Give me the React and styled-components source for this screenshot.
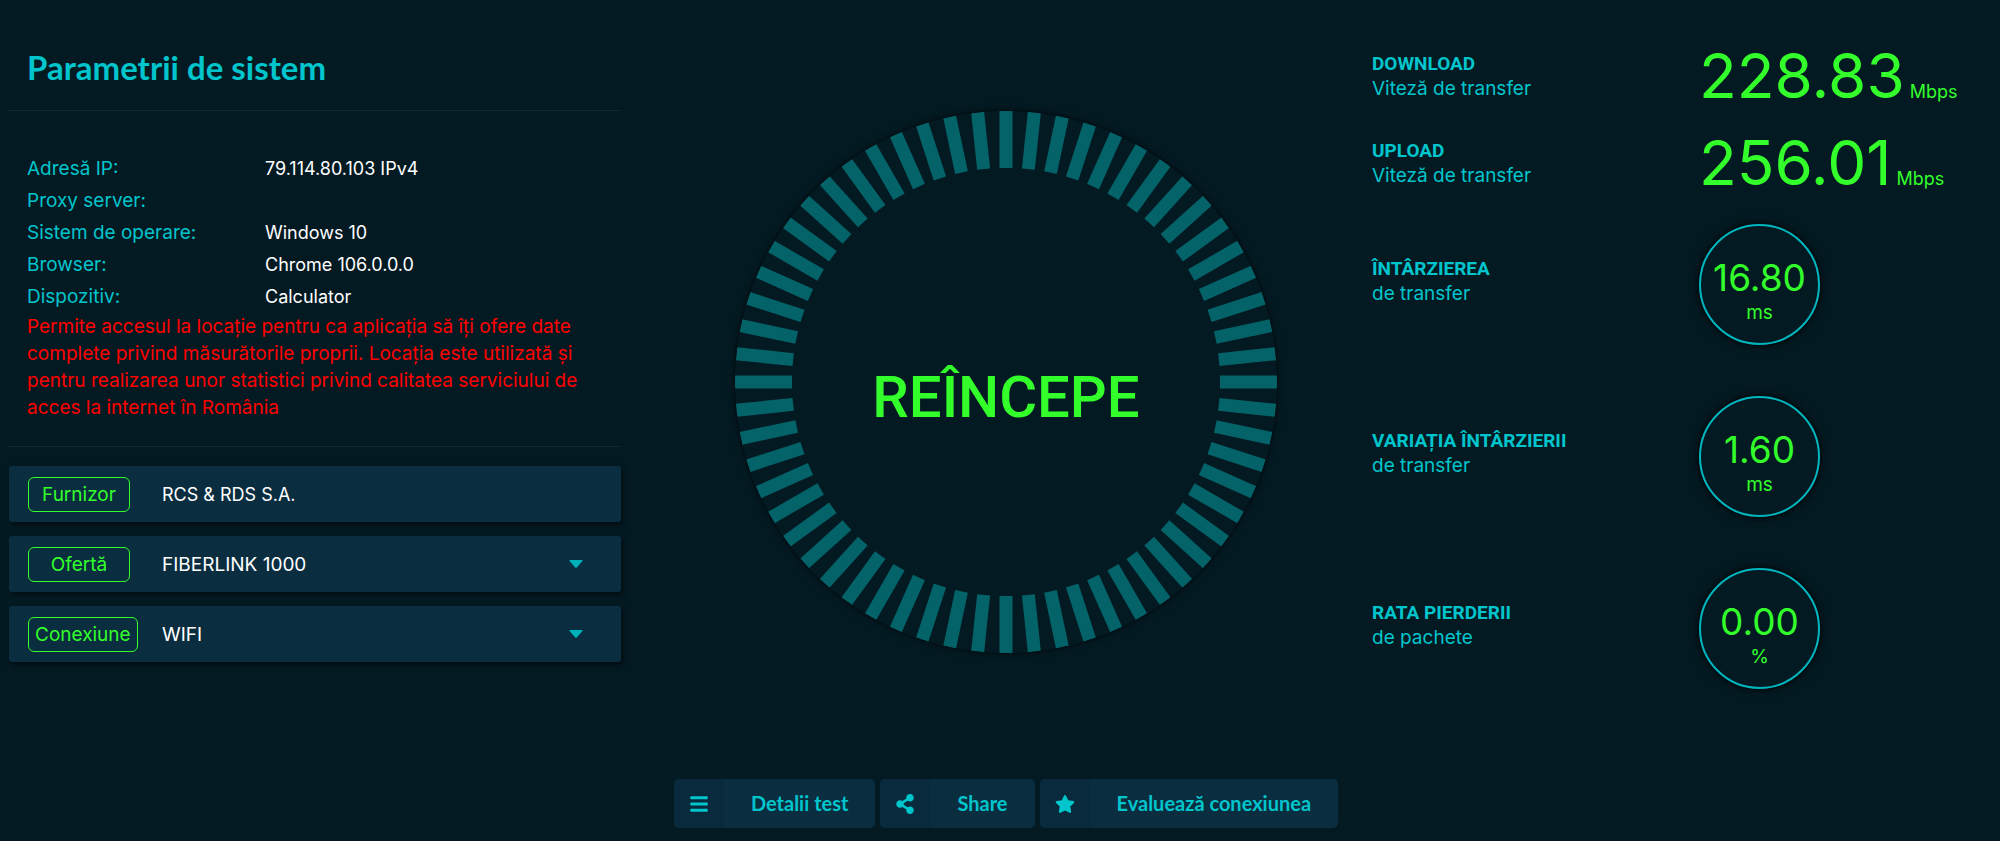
import React, { useState } from 'react'
import styled, { createGlobalStyle } from 'styled-components';
import { FaBars, FaShareAlt, FaStar } from 'react-icons/fa';

const systemInfo = [
  { label: 'Adresă IP:', value: '79.114.80.103 IPv4' },
  { label: 'Proxy server:', value: '' },
  { label: 'Sistem de operare:', value: 'Windows 10' },
  { label: 'Browser:', value: 'Chrome 106.0.0.0' },
  { label: 'Dispozitiv:', value: 'Calculator' },
];

const speeds = [
  { title: 'DOWNLOAD', value: '228.83' },
  { title: 'UPLOAD', value: '256.01' },
];

const gauges = [
  { title: 'ÎNTÂRZIEREA', sub: 'de transfer', value: '16.80', unit: 'ms' },
  { title: 'VARIAȚIA ÎNTÂRZIERII', sub: 'de transfer', value: '1.60', unit: 'ms' },
  { title: 'RATA PIERDERII', sub: 'de pachete', value: '0.00', unit: '%' },
];

const ticks = Array.from({ length: 60 }, (_, i) => i * 6);

function Dial() {
  return (
    <DialSvg viewBox="-271 -271 542 542" aria-hidden="true">
      <clipPath id="dial-edge">
        <circle r="271" />
      </clipPath>
      <g clipPath="url(#dial-edge)">
        {ticks.map((angle) => (
          <rect key={angle} x="-6.5" y="-271" width="13" height="57" transform={`rotate(${angle})`} />
        ))}
      </g>
    </DialSvg>
  )
}

function SelectRow({ id, label, options }) {
  const [value, setValue] = useState(options[0]);

  return (
    <Row>
      <Tag htmlFor={id}>{label}</Tag>
      <Select id={id} value={value} onChange={(e) => setValue(e.target.value)}>
        {options.map((option) => (
          <option key={option}>{option}</option>
        ))}
      </Select>
      <Caret viewBox="0 0 14 8" aria-hidden="true">
        <path d="M1 0h12q1 0 .5 1L7.800 7.400q-.8.8-1.600 0L.5 1Q0 0 1 0z" />
      </Caret>
    </Row>
  )
}

export default function App() {
  return (
    <>
      <GlobalStyle />
      <Page>
        <SystemPanel>
          <Title>Parametrii de sistem</Title>
          <InfoSection>
            <InfoList>
              {systemInfo.map((item) => (
                <InfoItem key={item.label}>
                  <dt>{item.label}</dt>
                  <dd>{item.value}</dd>
                </InfoItem>
              ))}
            </InfoList>
            <Warning>
              Permite accesul la locație pentru ca aplicația să îți ofere date complete privind
              măsurătorile proprii. Locația este utilizată și pentru realizarea unor statistici
              privind calitatea serviciului de acces la internet în România
            </Warning>
          </InfoSection>
          <Rows>
            <Row>
              <Tag as="span">Furnizor</Tag>
              <Provider>RCS &amp; RDS S.A.</Provider>
            </Row>
            <SelectRow id="offer" label="Ofertă" options={['FIBERLINK 1000']} />
            <SelectRow id="connection" label="Conexiune" options={['WIFI']} />
          </Rows>
        </SystemPanel>

        <TestPanel>
          <RestartButton type="button">
            <Dial />
            <span>REÎNCEPE</span>
          </RestartButton>
          <Actions>
            <ActionButton type="button">
              <ActionIcon><FaBars /></ActionIcon>
              <ActionText>Detalii test</ActionText>
            </ActionButton>
            <ActionButton type="button">
              <ActionIcon><FaShareAlt /></ActionIcon>
              <ActionText>Share</ActionText>
            </ActionButton>
            <ActionButton type="button">
              <ActionIcon><FaStar /></ActionIcon>
              <ActionText>Evaluează conexiunea</ActionText>
            </ActionButton>
          </Actions>
        </TestPanel>

        <ResultsPanel>
          {speeds.map((item) => (
            <SpeedRow key={item.title}>
              <ResultLabel $lift={16}>
                <h2>{item.title}</h2>
                <p>Viteză de transfer</p>
              </ResultLabel>
              <Speed>
                {item.value}
                <small>Mbps</small>
              </Speed>
            </SpeedRow>
          ))}
          <Gauges>
            {gauges.map((item) => (
              <GaugeRow key={item.title}>
                <ResultLabel $lift={7}>
                  <h2>{item.title}</h2>
                  <p>{item.sub}</p>
                </ResultLabel>
                <Gauge>
                  <strong>{item.value}</strong>
                  <span>{item.unit}</span>
                </Gauge>
              </GaugeRow>
            ))}
          </Gauges>
        </ResultsPanel>
      </Page>
    </>
  )
}

const GlobalStyle = createGlobalStyle`
  :root {
    --bg: #041a23;
    --card: #0a2d40;
    --teal: #00c5cc;
    --green: #33ff2b;
    --line: #16292f;
  }
  * {
    box-sizing: border-box;
  }
  body {
    margin: 0;
    background: var(--bg);
    color: var(--teal);
    font-family: Inter, sans-serif;
    font-size: 19px;
    line-height: 25px;
  }
  h1, h2, p, dl, dd {
    margin: 0;
  }
  button, select {
    font: inherit;
    color: inherit;
    border: 0;
    background: none;
    cursor: pointer;
  }
`;

const Page = styled.main`
  display: grid;
  grid-template-columns: 320fr 366fr 314fr;
  min-height: 100vh;
`;

const SystemPanel = styled.section`
  padding: 0 19px 0 9px;
`;

const Title = styled.h1`
  padding: 47px 18px 23px;
  border-bottom: 1px solid var(--line);
  font-family: Lato, sans-serif;
  font-size: 33px;
  line-height: 40px;
  font-weight: 700;
`;

const InfoSection = styled.div`
  padding: 42px 18px 25px;
  border-bottom: 1px solid var(--line);
`;

const InfoList = styled.dl`
  display: grid;
`;

const InfoItem = styled.div`
  display: grid;
  grid-template-columns: 238px 1fr;
  line-height: 32px;
  dd {
    color: #fff;
    font-size: 18px;
  }
`;

const Warning = styled.p`
  color: #f00;
  line-height: 27px;
`;

const Rows = styled.div`
  display: grid;
  gap: 14px;
  padding-top: 19px;
`;

const Row = styled.div`
  display: grid;
  grid-template-columns: 134px 1fr auto;
  align-items: center;
  height: 56px;
  padding: 0 38px 0 19px;
  border-radius: 3px;
  background: var(--card);
  box-shadow: 2px 3px 5px rgba(0, 0, 0, 0.5);
`;

const Tag = styled.label`
  justify-self: start;
  min-width: 102px;
  padding: 4px 6px;
  border: 1px solid var(--green);
  border-radius: 6px;
  color: var(--green);
  text-align: center;
`;

const Provider = styled.span`
  color: #fff;
  font-size: 18px;
`;

const Select = styled.select`
  padding: 0;
  appearance: none;
  color: #fff;
`;

const Caret = styled.svg`
  width: 14px;
  height: 8px;
  fill: #00afb8;
  pointer-events: none;
`;

const TestPanel = styled.section`
  display: flex;
  flex-direction: column;
  align-items: center;
  gap: 126px;
  padding-top: 111px;
`;

const RestartButton = styled.button`
  display: grid;
  place-items: center;
  width: 542px;
  max-width: 100%;
  padding: 0;
  border-radius: 50%;
  box-shadow: 0 0 6px rgba(0, 0, 0, 0.8);
  color: var(--green);
  font-family: Roboto, sans-serif;
  font-size: 58px;
  line-height: 72px;
  font-weight: 500;
  > * {
    grid-area: 1 / 1;
  }
  span {
    padding-top: 30px;
  }
`;

const DialSvg = styled.svg`
  display: block;
  width: 100%;
  fill: #036368;
`;

const Actions = styled.div`
  display: flex;
  gap: 5px;
`;

const ActionButton = styled.button`
  display: flex;
  padding: 0;
  border-radius: 5px;
  overflow: hidden;
  background: var(--card);
  font-family: Lato, sans-serif;
  font-size: 20px;
  line-height: 49px;
  font-weight: 700;
`;

const ActionIcon = styled.span`
  display: flex;
  align-items: center;
  justify-content: center;
  width: 50px;
  height: 49px;
  background: #082a3c;
`;

const ActionText = styled.span`
  padding: 0 27px;
`;

const ResultsPanel = styled.section`
  padding: 32px 0 0;
`;

const SpeedRow = styled.div`
  display: grid;
  grid-template-columns: 327px 1fr;
  align-items: center;
  height: 87px;
`;

const ResultLabel = styled.div`
  padding-bottom: ${(props) => props.$lift}px;
  h2 {
    font-family: Roboto, sans-serif;
    font-size: 19px;
    font-weight: 700;
  }
`;

const Speed = styled.p`
  color: var(--green);
  font-size: 62px;
  line-height: 87px;
  white-space: nowrap;
  small {
    margin-left: 5px;
    font-size: 18px;
  }
`;

const Gauges = styled.div`
  display: grid;
  gap: 51px;
  padding-top: 18px;
`;

const GaugeRow = styled.div`
  display: grid;
  grid-template-columns: 327px 1fr;
  align-items: center;
`;

const Gauge = styled.div`
  display: flex;
  flex-direction: column;
  align-items: center;
  justify-content: center;
  width: 121px;
  height: 121px;
  padding-top: 12px;
  border: 2px solid #00b6be;
  border-radius: 50%;
  box-shadow: 0 0 10px #000;
  color: var(--green);
  strong {
    font-size: 37px;
    line-height: 44px;
    font-weight: 400;
  }
`;
